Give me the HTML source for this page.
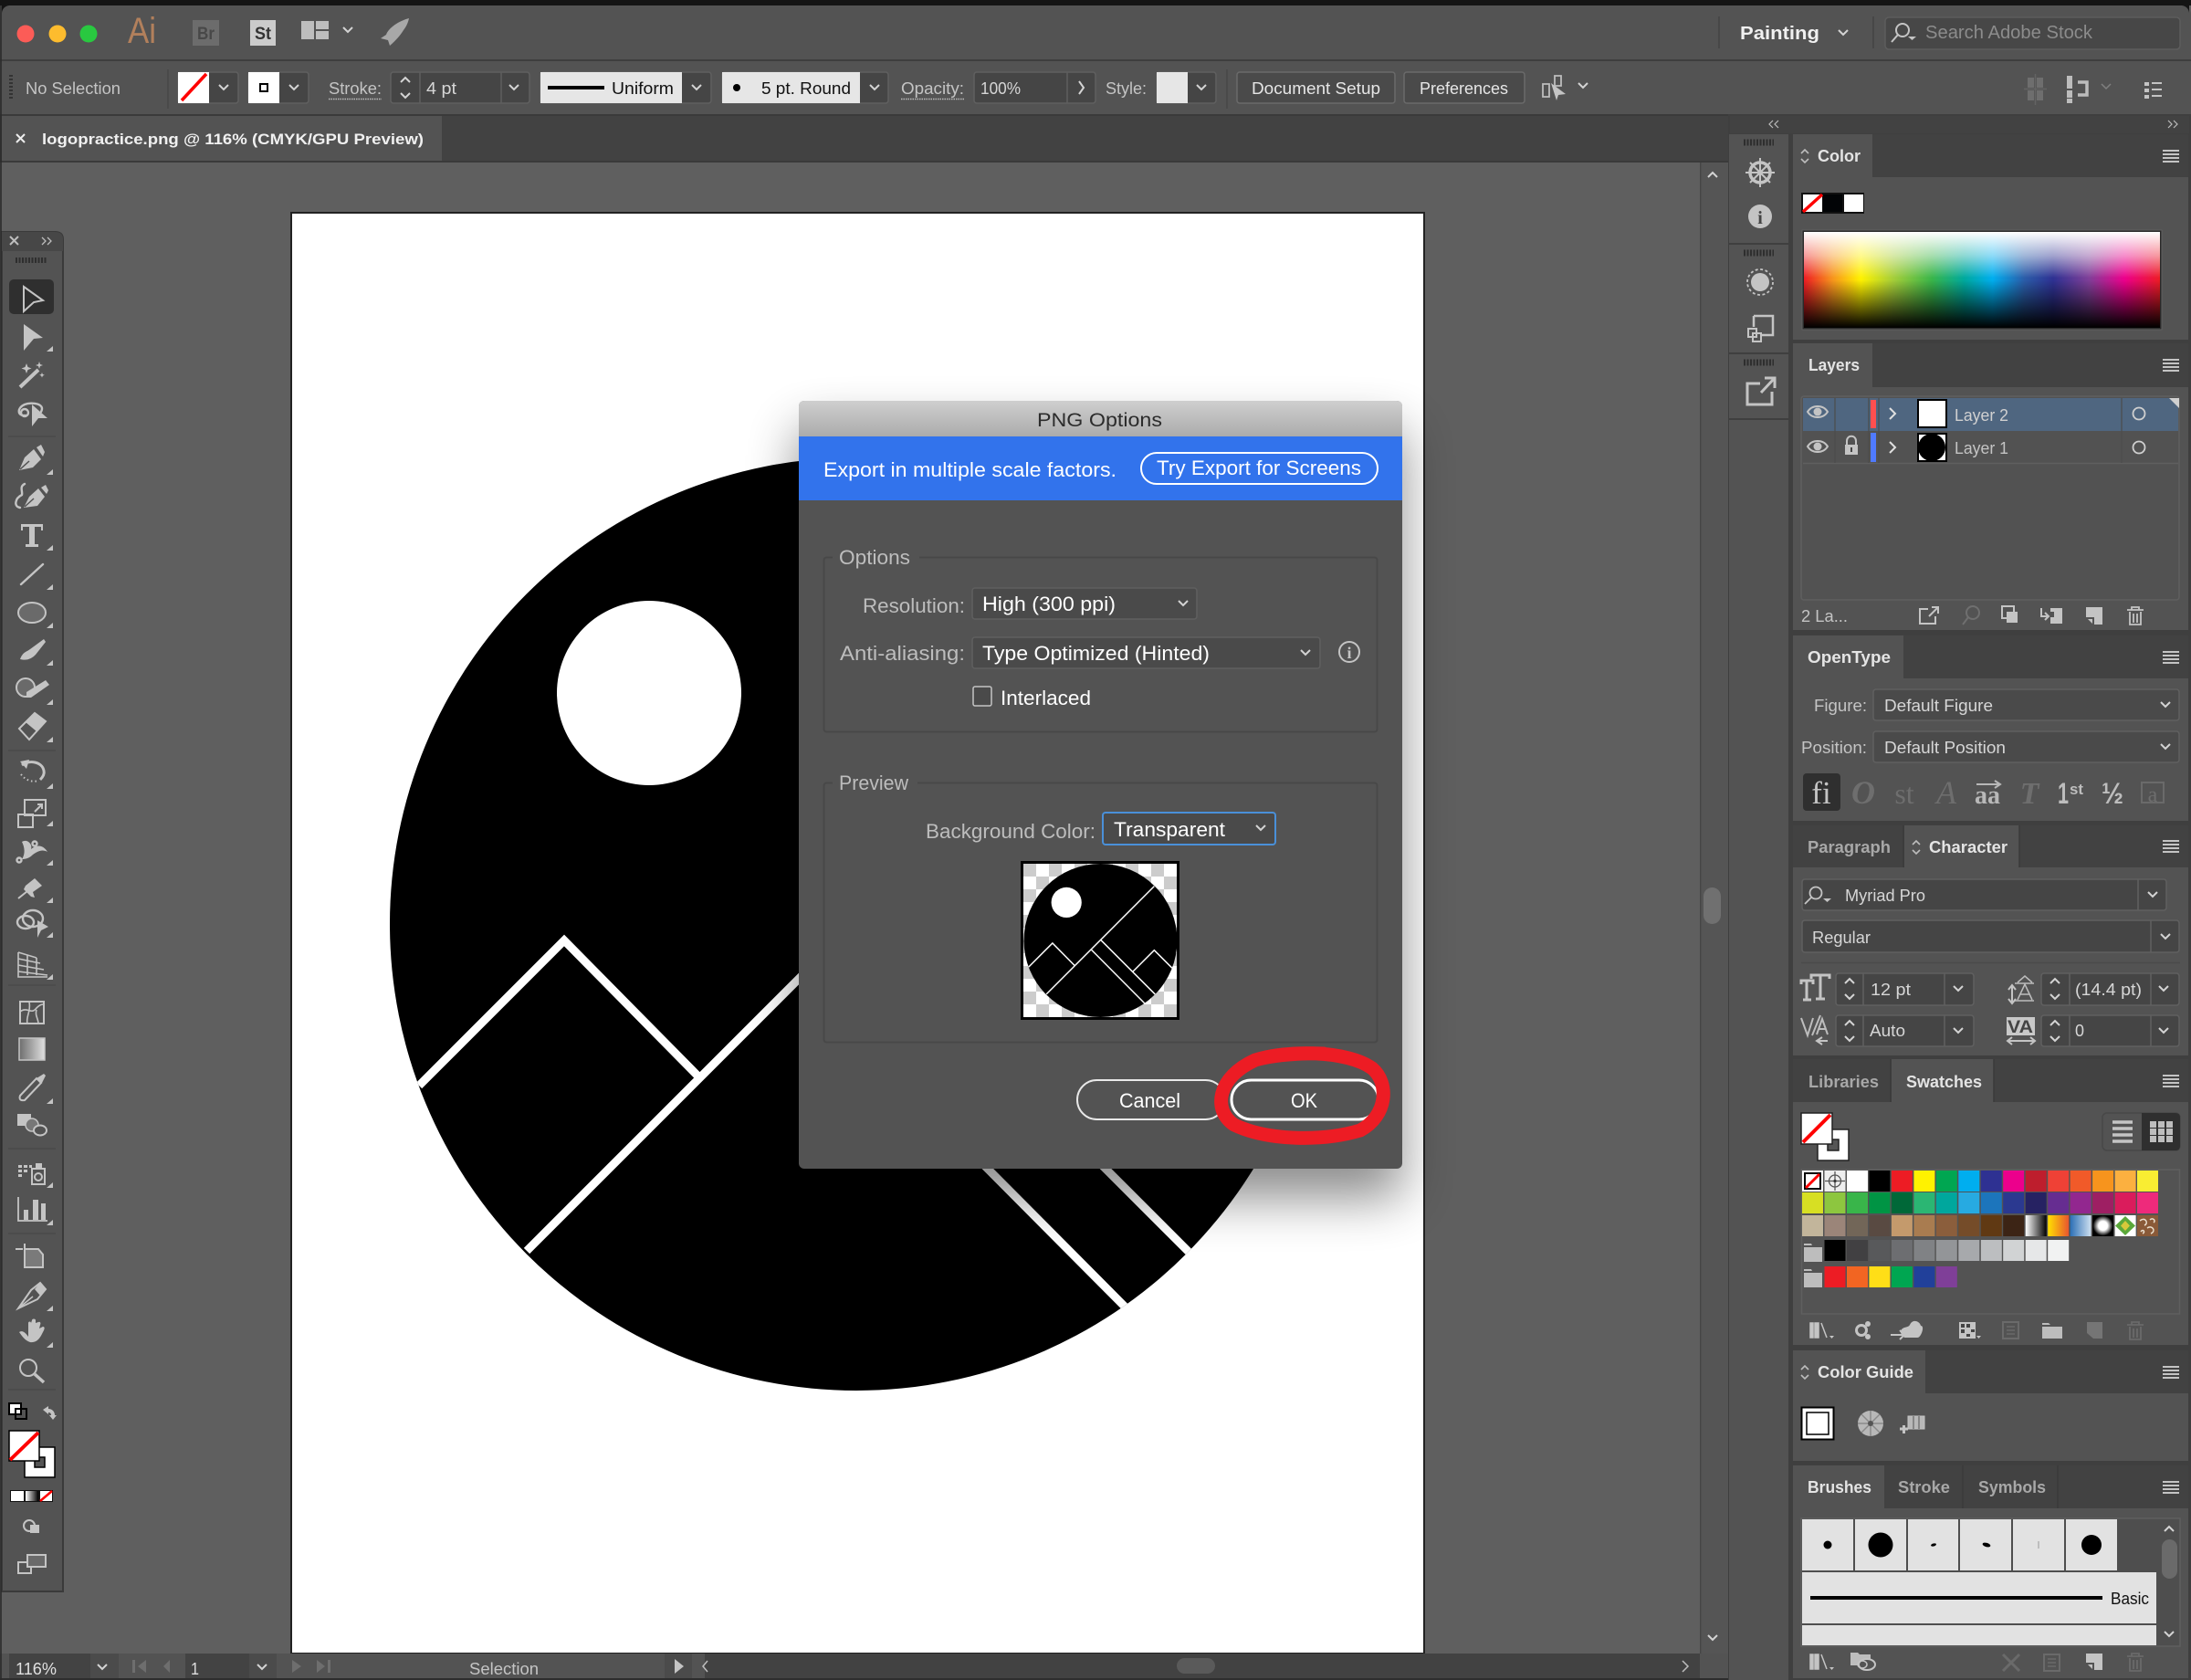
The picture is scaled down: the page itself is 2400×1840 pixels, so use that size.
<!DOCTYPE html>
<html><head><meta charset="utf-8"><title>PNG Options</title>
<style>
html,body{margin:0;padding:0;background:#535353;width:2400px;height:1840px;overflow:hidden}
svg{display:block;position:absolute;left:0;top:0}
text{font-family:"Liberation Sans",sans-serif;font-size:18px;fill:#d6d6d6}
.b{font-weight:700;fill:#e4e4e4}
.g{font-weight:700;fill:#a8a8a8}
.d{fill:#c4c4c4}
.w{fill:#fff;font-size:22px}
.l{fill:#bdbdbd;font-size:22px}
.ic{fill:#c4c4c4;stroke:none}
.st{fill:none;stroke:#c4c4c4;stroke-width:2.4;stroke-linecap:round;stroke-linejoin:round}
.f{fill:#454545;stroke:#606060;stroke-width:1.5}
</style></head><body>
<svg width="2400" height="1840" viewBox="0 0 2400 1840" xmlns="http://www.w3.org/2000/svg">
<defs>
<path id="c" d="M-5-3L0 2L5-3" fill="none" stroke="#d4d4d4" stroke-width="2"/>
<path id="cu" d="M-5 2L0-3L5 2" fill="none" stroke="#d4d4d4" stroke-width="2"/>
<rect id="s" width="23" height="23"/>
<path id="fly" d="M0 0h-7l7-6z" fill="#c4c4c4"/>
<g id="burger"><path d="M0 0h18M0 4h18M0 8h18M0 12h18" stroke="#c4c4c4" stroke-width="2"/></g>
<g id="sp"><use href="#cu" x="0" y="-8"/><use href="#c" x="0" y="9"/></g>
<g id="updn"><path d="M-4-3L0-7L4-3M-4 3L0 7L4 3" fill="none" stroke="#bdbdbd" stroke-width="1.600"/></g>
<g id="eye"><path d="M-11 0C-6-8 6-8 11 0C6 8-6 8-11 0Z" fill="none" stroke="#c4c4c4" stroke-width="2"/><circle r="4.500" fill="#c4c4c4"/></g>
<linearGradient id="tb" x1="0" y1="0" x2="0" y2="1"><stop offset="0" stop-color="#cfcfcf"/><stop offset="1" stop-color="#ababab"/></linearGradient>
<linearGradient id="hue" x1="0" y1="0" x2="1" y2="0">
<stop offset="0" stop-color="#ed1c24"/><stop offset=".08" stop-color="#f7941d"/><stop offset=".16" stop-color="#fff200"/><stop offset=".25" stop-color="#a6ce39"/><stop offset=".36" stop-color="#39b54a"/><stop offset=".45" stop-color="#00a99d"/><stop offset=".53" stop-color="#00aeef"/><stop offset=".62" stop-color="#2b5ca8"/><stop offset=".70" stop-color="#2e3192"/><stop offset=".8" stop-color="#7f3f98"/><stop offset=".9" stop-color="#ec008c"/><stop offset="1" stop-color="#ed1c24"/></linearGradient>
<linearGradient id="wb" x1="0" y1="0" x2="0" y2="1">
<stop offset="0" stop-color="#fff" stop-opacity="1"/><stop offset=".25" stop-color="#fff" stop-opacity=".55"/><stop offset=".48" stop-color="#fff" stop-opacity="0"/><stop offset=".5" stop-color="#000" stop-opacity="0"/><stop offset=".75" stop-color="#000" stop-opacity=".5"/><stop offset="1" stop-color="#000" stop-opacity="1"/></linearGradient>
<linearGradient id="gr1" x1="0" x2="1"><stop offset="0" stop-color="#fff"/><stop offset="1" stop-color="#000"/></linearGradient>
<linearGradient id="gr2" x1="0" x2="1"><stop offset="0" stop-color="#ffe000"/><stop offset="1" stop-color="#e8552f"/></linearGradient>
<linearGradient id="gr3" x1="0" x2="1"><stop offset="0" stop-color="#2b6fb5"/><stop offset="1" stop-color="#cfe0f0"/></linearGradient>
<radialGradient id="gr4"><stop offset=".45" stop-color="#fff"/><stop offset="1" stop-color="#000"/></radialGradient>
<linearGradient id="tg" x1="0" x2="1"><stop offset="0" stop-color="#6d6d6d"/><stop offset="1" stop-color="#e0e0e0"/></linearGradient>
<pattern id="chk" width="28" height="28" patternUnits="userSpaceOnUse" x="1121" y="946"><rect width="28" height="28" fill="#fff"/><rect width="14" height="14" fill="#ccc"/><rect x="14" y="14" width="14" height="14" fill="#ccc"/></pattern>
<clipPath id="cc"><circle cx="938" cy="1012" r="511"/></clipPath>
<g id="art">
<circle cx="938" cy="1012" r="511" fill="#000"/>
<circle cx="711" cy="759" r="101" fill="#fff"/>
<g clip-path="url(#cc)" fill="none" stroke="#fff" stroke-width="9">
<path d="M577 1370L1296 651"/><path d="M459 1189L618 1030L767 1181"/><path d="M875 1072L1232 1431"/><path d="M941 1010L1303 1372"/><path d="M1152 1221L1296 1077L1430 1211"/>
</g></g>
</defs>

<!-- base -->
<rect width="2400" height="1840" fill="#5f5f5f"/>
<rect width="2400" height="6" fill="#141414"/>
<rect x="0" y="6" width="2400" height="60" rx="10" fill="#535353"/>
<rect x="0" y="16" width="2400" height="50" fill="#535353"/>
<rect y="65" width="2400" height="2" fill="#3e3e3e"/>
<rect y="67" width="2400" height="58" fill="#535353"/>
<rect y="125" width="2400" height="52" fill="#424242"/>
<rect y="125" width="2400" height="2" fill="#3a3a3a"/>
<rect x="2" y="127" width="482" height="49" fill="#535353"/>
<rect y="176" width="1893" height="2" fill="#3a3a3a"/>
<rect x="0" y="178" width="1893" height="1640" fill="#5f5f5f"/>

<!-- artboard -->
<rect x="319" y="233" width="1241" height="1578" fill="#fff" stroke="#222" stroke-width="2"/>
<use href="#art"/>

<!-- title bar -->
<circle cx="28" cy="37" r="9.500" fill="#fc5c57"/><circle cx="63" cy="37" r="9.500" fill="#fdbc2e"/><circle cx="97" cy="37" r="9.500" fill="#29c840"/>
<text x="140" y="47" style="font-size:40px;fill:#b2805c" textLength="31" lengthAdjust="spacingAndGlyphs">Ai</text>
<rect x="211" y="22" width="29" height="28" fill="#6c6c6c"/><text x="216" y="43" style="font-size:19px;font-weight:700;fill:#484848" textLength="19" lengthAdjust="spacingAndGlyphs">Br</text>
<rect x="274" y="22" width="28" height="28" fill="#cbcbcb"/><text x="279" y="43" style="font-size:19px;font-weight:700;fill:#333" textLength="18" lengthAdjust="spacingAndGlyphs">St</text>
<path d="M330 23h14v20h-14zM346 23h14v9h-14zM346 34h14v9h-14z" fill="#bdbdbd"/><use href="#c" x="381" y="33"/>
<path d="M448 20C437 23 426 30 423 38L417 42L425 44L427 50C434 44 439 38 442 33C445 29 447 25 448 20Z" fill="#a8a8a8"/>
<path d="M1883 18V53M2052 18V53" stroke="#474747" stroke-width="2"/>
<text x="1906" y="43" class="b" style="font-size:20px;fill:#f0f0f0" textLength="87" lengthAdjust="spacingAndGlyphs">Painting</text><use href="#c" x="2019" y="36"/>
<rect x="2065" y="19" width="323" height="35" rx="4" fill="#474747" stroke="#5d5d5d" stroke-width="1.500"/>
<circle cx="2084" cy="33" r="7" fill="none" stroke="#c4c4c4" stroke-width="2"/><path d="M2079 38L2072 46" stroke="#c4c4c4" stroke-width="2"/><path d="M2090 40h9l-4.500 4z" fill="#c4c4c4"/>
<text x="2109" y="42" style="font-size:20px;fill:#8c8c8c" textLength="183" lengthAdjust="spacingAndGlyphs">Search Adobe Stock</text>

<!-- control bar -->
<path d="M12 82V110" stroke="#333" stroke-width="4" stroke-dasharray="2 2"/>
<text x="28" y="103" class="d" textLength="104" lengthAdjust="spacingAndGlyphs">No Selection</text>
<path d="M184 76V119" stroke="#484848" stroke-width="1.500"/>
<rect x="195" y="79" width="66" height="34" rx="3" class="f"/><rect x="195" y="79" width="34" height="34" fill="#fff"/><path d="M199 110L226 81" stroke="#f00" stroke-width="3.500"/><use href="#c" x="245" y="96"/>
<rect x="272" y="79" width="66" height="34" rx="3" class="f"/><rect x="272" y="79" width="34" height="34" fill="#fff"/><rect x="285" y="92" width="8" height="8" fill="none" stroke="#000" stroke-width="2"/><use href="#c" x="322" y="96"/>
<text x="360" y="103" class="d" textLength="58" lengthAdjust="spacingAndGlyphs">Stroke:</text><path d="M360 108.500H418" stroke="#bbb" stroke-width="1.500" stroke-dasharray="1.500 1"/>
<rect x="428" y="79" width="152" height="34" rx="3" class="f"/><path d="M460 79V113M549 79V113" stroke="#5e5e5e" stroke-width="1.500"/>
<use href="#sp" x="444" y="96"/>
<text x="467" y="103" textLength="33" lengthAdjust="spacingAndGlyphs">4 pt</text><use href="#c" x="563" y="96"/>
<rect x="592" y="79" width="187" height="34" rx="3" class="f"/><rect x="592" y="79" width="155" height="34" fill="#e6e6e6"/><rect x="600" y="94" width="62" height="4" fill="#000"/>
<text x="670" y="103" style="fill:#111" textLength="68" lengthAdjust="spacingAndGlyphs">Uniform</text><use href="#c" x="763" y="96"/>
<rect x="791" y="79" width="182" height="34" rx="3" class="f"/><rect x="791" y="79" width="151" height="34" fill="#e6e6e6"/><circle cx="807" cy="96" r="4" fill="#000"/>
<text x="834" y="103" style="fill:#111" textLength="98" lengthAdjust="spacingAndGlyphs">5 pt. Round</text><use href="#c" x="958" y="96"/>
<text x="987" y="103" class="d" textLength="69" lengthAdjust="spacingAndGlyphs">Opacity:</text><path d="M987 108.500H1056" stroke="#bbb" stroke-width="1.500" stroke-dasharray="1.500 1"/>
<rect x="1067" y="79" width="133" height="34" rx="3" class="f"/><path d="M1169 79V113" stroke="#5e5e5e" stroke-width="1.500"/>
<text x="1074" y="103" textLength="44" lengthAdjust="spacingAndGlyphs">100%</text><path d="M1182 89L1187 96L1182 103" fill="none" stroke="#d4d4d4" stroke-width="2"/>
<text x="1211" y="103" class="d" textLength="45" lengthAdjust="spacingAndGlyphs">Style:</text>
<rect x="1267" y="79" width="65" height="34" rx="3" class="f"/><rect x="1267" y="79" width="34" height="34" fill="#e6e6e6"/><use href="#c" x="1316" y="96"/>
<path d="M1344 76V119" stroke="#484848" stroke-width="1.500"/>
<rect x="1355" y="79" width="173" height="34" rx="3" fill="#4a4a4a" stroke="#6a6a6a" stroke-width="1.500"/><text x="1371" y="103" style="fill:#e6e6e6" textLength="141" lengthAdjust="spacingAndGlyphs">Document Setup</text>
<rect x="1538" y="79" width="132" height="34" rx="3" fill="#4a4a4a" stroke="#6a6a6a" stroke-width="1.500"/><text x="1555" y="103" style="fill:#e6e6e6" textLength="97" lengthAdjust="spacingAndGlyphs">Preferences</text>
<path d="M1690 92h7v14h-7zM1703 83h7v11h-7z" fill="none" stroke="#bdbdbd" stroke-width="1.800"/><path d="M1699 91L1715 103L1707 104L1705 110Z" fill="#c4c4c4"/><use href="#c" x="1734" y="94"/>
<path d="M2221 85h7v11h-7zM2231 85h7v11h-7zM2221 99h7v11h-7zM2231 99h7v11h-7z" fill="#6e6e6e"/><path d="M2229.500 81V115M2217 97.500H2242" stroke="#646464" stroke-width="1.500"/>
<path d="M2264 83h6v14h-6zM2264 99h6v8h-6z" fill="#bdbdbd"/><path d="M2276 90H2286V104H2276" fill="none" stroke="#bdbdbd" stroke-width="3.500"/><rect x="2264" y="108" width="6" height="5" fill="#bdbdbd"/>
<path d="M2302 92L2307 97L2312 92" fill="none" stroke="#808080" stroke-width="1.500"/>
<path d="M2349 90h5v4h-5zM2349 97h5v4h-5zM2349 104h5v4h-5zM2357 90h11v2h-11zM2357 97h11v2h-11zM2357 104h11v2h-11z" fill="#c4c4c4"/>

<!-- doc tab -->
<path d="M18 147L27 156M27 147L18 156" stroke="#eee" stroke-width="2"/>
<text x="46" y="158" class="b" style="font-size:17px;fill:#f0f0f0" textLength="418" lengthAdjust="spacingAndGlyphs">logopractice.png @ 116% (CMYK/GPU Preview)</text>

<!-- v scrollbar -->
<rect x="1862" y="178" width="31" height="1633" fill="#555"/>
<rect x="1862" y="178" width="1.500" height="1633" fill="#464646"/>
<use href="#cu" x="1876" y="192"/><use href="#c" x="1876" y="1794"/>
<rect x="1866" y="972" width="19" height="40" rx="9.500" fill="#707070"/>

<!-- toolbar -->
<path d="M2 254H60Q69 254 69 262V1743H2Z" fill="#535353" stroke="#3a3a3a" stroke-width="2"/>
<path d="M2 254H60Q69 254 69 262V275H2Z" fill="#474747"/>
<path d="M11 259L20 268M20 259L11 268" stroke="#bdbdbd" stroke-width="2"/>
<path d="M46 260L50 264L46 268M52 260L56 264L52 268" fill="none" stroke="#bdbdbd" stroke-width="1.300"/>
<path d="M17 285H51" stroke="#2e2e2e" stroke-width="6" stroke-dasharray="2 1.500"/>
<rect x="10" y="306" width="49" height="38" rx="5" fill="#2f2f2f"/>
<path d="M26 314L47 329L37 331L26 341Z" fill="none" stroke="#c4c4c4" stroke-width="2"/>
<path d="M26 355L47 370L37 371L26 384Z" class="ic"/><use href="#fly" x="58" y="385"/>
<path d="M22 424L42 405" stroke="#c4c4c4" stroke-width="4"/><path d="M29 398l1.500 4 4 1.500-4 1.500-1.500 4-1.500-4-4-1.500 4-1.500zM43 396l1 3 3 1-3 1-1 3-1-3-3-1 3-1zM46 408l.8 2 2 .8-2 .8-.8 2-.8-2-2-.8 2-.8z" class="ic"/>
<path d="M45 451C50 442 35 440 27 443C18 447 19 456 28 455" class="st"/><circle cx="27" cy="452" r="4" class="st"/><path d="M35 443L52 458L42 458L35 467Z" class="ic"/>
<path d="M21 515L27 501L37 492L45 503L36 512Z" class="ic"/><path d="M22 514L32 505" stroke="#535353" stroke-width="1.500"/><path d="M40 490L45 487L49 495L47 500Z" class="ic"/><use href="#fly" x="58" y="520"/>
<path d="M26 556L32 544L42 535L49 544L41 554Z" class="ic"/><path d="M27 555L37 546" stroke="#535353" stroke-width="1.500"/><path d="M45 534L50 531L53 537L51 541Z" class="ic"/><path d="M27 530C21 533 25 538 24 542C16 546 15 555 22 556" class="st"/>
<path d="M23 581V574H47V581H45V577H38V596H42V599H28V596H32V577H25V581Z" class="ic"/><use href="#fly" x="58" y="603"/>
<path d="M23 640L47 618" class="st"/><use href="#fly" x="58" y="646"/>
<ellipse cx="35" cy="671" rx="15" ry="11" fill="#6a6a6a" stroke="#c4c4c4" stroke-width="2"/><use href="#fly" x="58" y="688"/>
<path d="M22 722C25 714 29 714 33 711L48 700L50 703L39 717C35 721 30 724 22 722Z" class="ic"/><use href="#fly" x="58" y="729"/>
<circle cx="28" cy="753" r="10" fill="#6a6a6a" stroke="#c4c4c4" stroke-width="2"/><path d="M29 758L50 745L54 750L34 764L29 764Z" class="ic"/><use href="#fly" x="58" y="772"/>
<path d="M21 798L38 781L50 790L32 810Z" fill="none" stroke="#c4c4c4" stroke-width="2"/><path d="M28 791L38 781L50 790L40 801Z" class="ic"/><use href="#fly" x="58" y="813"/>
<path d="M24 838C32 832 46 834 48 844C49 848 46 852 44 854" fill="none" stroke="#c4c4c4" stroke-width="3"/><path d="M22 834L32 832L29 842Z" class="ic"/><path d="M23 848C28 855 36 857 42 855" fill="none" stroke="#c4c4c4" stroke-width="2" stroke-dasharray="1.500 3"/><use href="#fly" x="58" y="864"/>
<path d="M20 892h16v14h-16zM27 876h23v17h-23z" fill="none" stroke="#c4c4c4" stroke-width="2"/><path d="M38 889L46 881M41 881H46V886" fill="none" stroke="#c4c4c4" stroke-width="2"/><use href="#fly" x="58" y="905"/>
<path d="M24 941C28 935 27 928 24 922C30 918 36 925 34 930C40 925 47 925 52 933C46 930 42 932 36 936C32 940 28 941 24 941Z" class="ic"/><circle cx="21" cy="942" r="2.500" class="st"/><circle cx="38" cy="924" r="2.500" class="st"/><use href="#fly" x="58" y="948"/>
<path d="M20 984L30 976" stroke="#c4c4c4" stroke-width="2"/><path d="M28 970L38 962L46 970L36 977L38 983L34 982L26 974Z" class="ic"/><use href="#fly" x="58" y="989"/>
<ellipse cx="28" cy="1010" rx="9" ry="7" class="st"/><ellipse cx="36" cy="1006" rx="11" ry="9" class="st"/><path d="M41 1008L53 1015L45 1019L41 1027Z" class="ic"/><use href="#fly" x="58" y="1027"/>
<path d="M20 1043V1070H52M20 1043L40 1049M20 1050L44 1055M20 1057L48 1062M20 1064L52 1068M30 1046V1068M40 1049V1068" fill="none" stroke="#c4c4c4" stroke-width="1.600"/><use href="#fly" x="58" y="1073"/>
<path d="M22 1097H48V1121H22Z" fill="none" stroke="#c4c4c4" stroke-width="2"/><path d="M22 1108C30 1102 34 1112 40 1104C44 1100 46 1100 48 1100M32 1097C34 1108 28 1114 30 1121M40 1106C38 1112 42 1116 42 1121" fill="none" stroke="#c4c4c4" stroke-width="1.600"/>
<rect x="21" y="1137" width="28" height="24" fill="url(#tg)" stroke="#c4c4c4" stroke-width="1.500"/>
<path d="M22 1200L40 1181L45 1186L27 1205Q20 1206 22 1200Z" fill="none" stroke="#c4c4c4" stroke-width="2"/><path d="M40 1181L48 1176L50 1178L46 1186Z" class="ic"/><use href="#fly" x="58" y="1209"/>
<rect x="19" y="1220" width="15" height="13" fill="#c4c4c4"/><circle cx="35" cy="1232" r="7" fill="#777" stroke="#c4c4c4" stroke-width="1.500"/><ellipse cx="44" cy="1238" rx="7" ry="5.500" fill="#535353" stroke="#c4c4c4" stroke-width="2"/>
<path d="M20 1276h4v3h-4zM26 1276h4v3h-4zM32 1276h3v3h-3zM20 1281h4v3h-4zM26 1281h4v3h-4zM20 1286h4v3h-4z" class="ic"/><path d="M35 1280H49V1297H35Z" fill="none" stroke="#c4c4c4" stroke-width="2"/><rect x="39" y="1274" width="7" height="6" fill="#c4c4c4"/><circle cx="42" cy="1289" r="4" fill="none" stroke="#c4c4c4" stroke-width="2"/><use href="#fly" x="58" y="1301"/>
<path d="M20 1311V1337H52" fill="none" stroke="#c4c4c4" stroke-width="1.800"/><path d="M26 1325h5v11h-5zM36 1314h6v22h-6zM45 1318h5v18h-5z" class="ic"/><use href="#fly" x="58" y="1342"/>
<path d="M27 1362V1372M17 1368H25" stroke="#c4c4c4" stroke-width="2"/><path d="M27 1368H42L47 1374V1388H27Z" fill="#7a7a7a" stroke="#c4c4c4" stroke-width="2"/>
<path d="M20 1433L34 1413L44 1405L50 1412L41 1423Z" fill="none" stroke="#c4c4c4" stroke-width="2"/><path d="M20 1433L36 1420" stroke="#c4c4c4" stroke-width="1.500"/><path d="M38 1412L44 1405L50 1412L44 1419Z" class="ic"/><use href="#fly" x="58" y="1436"/>
<path d="M21 1459C25 1456 29 1461 31 1464V1449C31 1447 34 1447 34 1449L35 1446C35 1444 39 1444 39 1446V1449L42 1448C44 1447 45 1449 44 1451L43 1455L47 1453C49 1453 49 1455 48 1457C45 1463 42 1471 33 1470C27 1468 24 1463 21 1459Z" class="ic"/><use href="#fly" x="58" y="1476"/>
<circle cx="31" cy="1498" r="9" fill="none" stroke="#c4c4c4" stroke-width="2"/><path d="M38 1505L48 1514" stroke="#c4c4c4" stroke-width="3.500"/>
<rect x="10" y="1537" width="13" height="12" fill="#fff" stroke="#000" stroke-width="2"/><rect x="17" y="1543" width="12" height="11" fill="none" stroke="#000" stroke-width="2"/>
<path d="M47 1544L53 1540V1543C57 1543 60 1546 60 1550H62L58 1555L54 1550H56C56 1548 55 1547 53 1547V1549Z" class="ic"/>
<rect x="27" y="1585" width="33" height="33" fill="#fff" stroke="#000" stroke-width="1.500"/><rect x="38" y="1596" width="11" height="11" fill="#555" stroke="#000" stroke-width="1.500"/>
<rect x="10" y="1567" width="33" height="33" fill="#fff" stroke="#000" stroke-width="1.500"/><path d="M11 1599L42 1569" stroke="#f00" stroke-width="4"/>
<rect x="11" y="1632" width="47" height="13" fill="#111"/><rect x="12" y="1633" width="14" height="11" fill="#fff"/><rect x="28" y="1633" width="14" height="11" fill="url(#gr1)"/><rect x="44" y="1633" width="13" height="11" fill="#fff"/><path d="M44 1644L57 1633" stroke="#f00" stroke-width="2.500"/>
<circle cx="32" cy="1671" r="6" fill="none" stroke="#c4c4c4" stroke-width="2"/><rect x="33" y="1670" width="10" height="9" fill="#c4c4c4"/>
<path d="M20 1711h14v12h-14z" fill="none" stroke="#c4c4c4" stroke-width="2"/><rect x="30" y="1703" width="20" height="13" fill="#6a6a6a" stroke="#c4c4c4" stroke-width="2"/>
<path d="M9 478H61M9 822H61M9 1079H61M9 1258H61M9 1351H61M9 1522H61" stroke="#4a4a4a" stroke-width="1.500"/>

<!-- status bar -->
<rect x="0" y="1811" width="1893" height="27" fill="#535353"/>
<rect x="772" y="1811" width="1090" height="27" fill="#424242"/>
<rect x="10" y="1811" width="89" height="27" fill="#434343"/><rect x="99" y="1811" width="31" height="27" fill="#4b4b4b"/>
<rect x="203" y="1811" width="70" height="27" fill="#434343"/><rect x="273" y="1811" width="30" height="27" fill="#4b4b4b"/>
<text x="17" y="1834" style="fill:#e0e0e0" textLength="45" lengthAdjust="spacingAndGlyphs">116%</text><use href="#c" x="112" y="1826"/>
<path d="M145 1818h3v14h-3zM160 1818L151 1825L160 1832ZM186 1818L179 1825L186 1832Z" fill="#6e6e6e"/>
<text x="209" y="1834" style="fill:#e0e0e0" textLength="9" lengthAdjust="spacingAndGlyphs">1</text><use href="#c" x="287" y="1826"/>
<path d="M320 1818L330 1825L320 1832ZM347 1818L356 1825L347 1832ZM359 1818h3v14h-3z" fill="#6e6e6e"/>
<text x="514" y="1834" class="d" textLength="76" lengthAdjust="spacingAndGlyphs">Selection</text>
<rect x="728" y="1811" width="30" height="27" fill="#4b4b4b"/><path d="M739 1817L749 1825L739 1833Z" fill="#c4c4c4"/>
<path d="M775 1819L770 1825L775 1831" fill="none" stroke="#bdbdbd" stroke-width="1.500"/>
<rect x="1289" y="1816" width="42" height="17" rx="8.500" fill="#5a5a5a"/>
<path d="M1843 1819L1849 1825L1843 1831" fill="none" stroke="#bdbdbd" stroke-width="1.500"/>
<rect y="1838" width="2400" height="2" fill="#2e2e2e"/>

<!-- panels background -->
<rect x="1893" y="125" width="507" height="1715" fill="#3f3f3f"/>
<rect x="1895" y="127" width="503" height="19" fill="#424242"/>
<path d="M1942 132L1938 136L1942 140M1948 132L1944 136L1948 140" fill="none" stroke="#bdbdbd" stroke-width="1.200"/>
<path d="M2375 132L2379 136L2375 140M2381 132L2385 136L2381 140" fill="none" stroke="#bdbdbd" stroke-width="1.200"/>

<!-- icon dock -->
<rect x="1894" y="147" width="65" height="119" fill="#535353"/><rect x="1894" y="268" width="65" height="118" fill="#535353"/><rect x="1894" y="388" width="65" height="70" fill="#535353"/><rect x="1894" y="460" width="65" height="1380" fill="#535353"/>
<path d="M1910 156H1943M1910 277H1943M1910 397H1943" stroke="#2e2e2e" stroke-width="7" stroke-dasharray="2 1.500"/>
<circle cx="1928" cy="189" r="11" fill="none" stroke="#c4c4c4" stroke-width="3.500"/><circle cx="1928" cy="189" r="3" fill="#c4c4c4"/><path d="M1928 173V205M1912 189H1944M1917 178L1939 200M1939 178L1917 200" stroke="#c4c4c4" stroke-width="2"/>
<circle cx="1928" cy="237" r="13" fill="#c4c4c4"/><text x="1928" y="245" text-anchor="middle" style="font-size:20px;font-weight:700;font-family:'Liberation Serif',serif;fill:#444">i</text>
<circle cx="1928" cy="309" r="10" fill="#c4c4c4"/><circle cx="1928" cy="309" r="14" fill="none" stroke="#c4c4c4" stroke-width="1.800" stroke-dasharray="3 2.500"/>
<path d="M1921 346H1942V367H1928" fill="none" stroke="#c4c4c4" stroke-width="2.500"/><path d="M1915 360h9v9h-9zM1920 365h9v9h-9z" fill="#535353" stroke="#c4c4c4" stroke-width="2"/><path d="M1921 346V358" stroke="#c4c4c4" stroke-width="2.500"/>
<path d="M1928 420H1914V443H1941V429" fill="none" stroke="#c4c4c4" stroke-width="3"/><path d="M1929 430L1943 415M1933 414H1944V425" fill="none" stroke="#c4c4c4" stroke-width="3"/>

<!-- Color panel -->
<rect x="1964" y="147" width="433" height="47" fill="#424242"/><rect x="1964" y="194" width="433" height="178" fill="#535353"/><rect x="1964" y="147" width="87" height="48" fill="#535353"/>
<use href="#updn" x="1977" y="171"/><text x="1991" y="177" class="b" textLength="47" lengthAdjust="spacingAndGlyphs">Color</text><use href="#burger" x="2369" y="165"/>
<rect x="1973" y="211" width="69" height="23" fill="#111"/><rect x="1975" y="213" width="21" height="19" fill="#fff"/><path d="M1975 232L1996 213" stroke="#f00" stroke-width="3.500"/><rect x="1997" y="213" width="21" height="19" fill="#020406"/><rect x="2020" y="213" width="21" height="19" fill="#fff"/>
<rect x="1974" y="252" width="394" height="109" fill="#2a2a2a" stroke="#606060" stroke-width="1"/>
<rect x="1976" y="254" width="390" height="105" fill="url(#hue)"/><rect x="1976" y="254" width="390" height="105" fill="url(#wb)"/>

<!-- Layers -->
<rect x="1964" y="376" width="433" height="48" fill="#424242"/><rect x="1964" y="424" width="433" height="266" fill="#535353"/><rect x="1964" y="376" width="87" height="49" fill="#535353"/>
<text x="1981" y="406" class="b" textLength="56" lengthAdjust="spacingAndGlyphs">Layers</text><use href="#burger" x="2369" y="394"/>
<rect x="1973" y="434" width="414" height="223" rx="3" fill="#525252" stroke="#5f5f5f" stroke-width="1.500"/>
<rect x="1975" y="436" width="411" height="36" fill="#4f6680"/><path d="M1975 507.500H2386" stroke="#5f5f5f" stroke-width="1.500"/>
<path d="M2010 436V507M2047 436V507M2058 436V507M2324 436V507" stroke="#4c4c4c" stroke-width="1.200"/>
<path d="M2376 436H2387V447Z" fill="#d0d0d0"/>
<use href="#eye" x="1991" y="451"/><use href="#eye" x="1991" y="489"/>
<path d="M2023 487V483C2023 476 2033 476 2033 483V487" fill="none" stroke="#c4c4c4" stroke-width="2"/><rect x="2021" y="487" width="14" height="11" fill="#c4c4c4"/><rect x="2027" y="490" width="2" height="5" fill="#444"/>
<rect x="2049" y="438" width="6" height="31" fill="#ff4f4f"/><rect x="2049" y="474" width="6" height="32" fill="#4f7aff"/>
<path d="M2070 447L2076 453L2070 459M2070 484L2076 490L2070 496" fill="none" stroke="#e0e0e0" stroke-width="2"/>
<rect x="2100" y="437" width="33" height="32" fill="#000"/><rect x="2102" y="439" width="29" height="28" fill="#fff"/>
<rect x="2100" y="474" width="33" height="32" fill="#000"/><rect x="2102" y="476" width="29" height="28" fill="#fff"/><circle cx="2116" cy="490" r="15" fill="#000"/>
<text x="2141" y="461" textLength="59" lengthAdjust="spacingAndGlyphs" style="fill:#d0d0d0">Layer 2</text><text x="2141" y="497" textLength="59" lengthAdjust="spacingAndGlyphs" style="fill:#c4c4c4">Layer 1</text>
<circle cx="2343" cy="453" r="6.500" fill="none" stroke="#d0d0d0" stroke-width="1.800"/><circle cx="2343" cy="490" r="6.500" fill="none" stroke="#d0d0d0" stroke-width="1.800"/>
<text x="1973" y="681" class="d" textLength="51" lengthAdjust="spacingAndGlyphs">2 La...</text>
<path d="M2112 667H2103V683H2120V675M2113 675L2122 666M2116 665H2123V672" fill="none" stroke="#c4c4c4" stroke-width="2"/>
<circle cx="2161" cy="671" r="7" fill="none" stroke="#6f6f6f" stroke-width="2"/><path d="M2156 676L2150 684" stroke="#6f6f6f" stroke-width="2"/>
<path d="M2193 664h13v13h-13z" fill="none" stroke="#c4c4c4" stroke-width="2"/><rect x="2198" y="670" width="12" height="12" fill="#c4c4c4"/>
<path d="M2236 666V675H2244M2240 671L2244 675L2240 679" fill="none" stroke="#c4c4c4" stroke-width="2"/><path d="M2246 666H2259V683H2246V676H2250V670H2246Z" fill="#c4c4c4"/>
<path d="M2285 665H2303V684H2293L2285 676Z" fill="#c4c4c4"/><path d="M2285 677H2293V685" fill="none" stroke="#535353" stroke-width="2"/>
<path d="M2330 668H2348M2335 668V665H2343V668M2333 670V684H2345V670M2337 672V682M2341 672V682" fill="none" stroke="#c4c4c4" stroke-width="1.800"/>

<!-- OpenType -->
<rect x="1964" y="696" width="433" height="47" fill="#424242"/><rect x="1964" y="743" width="433" height="156" fill="#535353"/><rect x="1964" y="696" width="121" height="48" fill="#535353"/>
<text x="1980" y="726" class="b" textLength="91" lengthAdjust="spacingAndGlyphs">OpenType</text><use href="#burger" x="2369" y="714"/>
<text x="1987" y="779" class="d" textLength="58" lengthAdjust="spacingAndGlyphs">Figure:</text><text x="1973" y="825" class="d" textLength="72" lengthAdjust="spacingAndGlyphs">Position:</text>
<rect x="2052" y="755" width="335" height="34" rx="3" fill="#4a4a4a" stroke="#606060" stroke-width="1.500"/><rect x="2052" y="801" width="335" height="34" rx="3" fill="#4a4a4a" stroke="#606060" stroke-width="1.500"/>
<text x="2064" y="779" textLength="119" lengthAdjust="spacingAndGlyphs">Default Figure</text><text x="2064" y="825" textLength="133" lengthAdjust="spacingAndGlyphs">Default Position</text>
<use href="#c" x="2372" y="772"/><use href="#c" x="2372" y="818"/>
<rect x="1975" y="847" width="41" height="41" rx="4" fill="#2f2f2f"/>
<text x="1995" y="880" text-anchor="middle" style="font-family:'Liberation Serif',serif;font-size:35px;fill:#c4c4c4">fi</text>
<text x="2041" y="880" text-anchor="middle" style="font-family:'Liberation Serif',serif;font-size:36px;font-style:italic;font-weight:700;fill:#6e6e6e">O</text>
<text x="2086" y="880" text-anchor="middle" style="font-family:'Liberation Serif',serif;font-size:32px;fill:#6e6e6e">st</text>
<text x="2132" y="880" text-anchor="middle" style="font-family:'Liberation Serif',serif;font-size:36px;font-style:italic;fill:#6e6e6e">A</text>
<text x="2177" y="880" text-anchor="middle" style="font-family:'Liberation Serif',serif;font-size:28px;font-weight:700;fill:#b8b8b8">aa</text>
<path d="M2165 859H2190M2185 855L2191 859L2185 863" fill="none" stroke="#b8b8b8" stroke-width="2"/>
<text x="2223" y="880" text-anchor="middle" style="font-family:'Liberation Serif',serif;font-size:34px;font-style:italic;font-weight:700;fill:#6e6e6e">T</text>
<text x="2260" y="880" text-anchor="middle" style="font-size:32px;font-weight:700;fill:#bdbdbd" textLength="12" lengthAdjust="spacingAndGlyphs">1</text>
<text x="2267" y="870" style="font-size:17px;font-weight:700;fill:#bdbdbd" textLength="15" lengthAdjust="spacingAndGlyphs">st</text>
<text x="2314" y="880" text-anchor="middle" style="font-size:32px;font-weight:700;fill:#bdbdbd" textLength="24" lengthAdjust="spacingAndGlyphs">½</text>
<rect x="2346" y="857" width="24" height="22" fill="none" stroke="#6a6a6a" stroke-width="2"/><text x="2358" y="878" text-anchor="middle" style="font-family:'Liberation Serif',serif;font-size:24px;fill:#6e6e6e">a</text>

<!-- Character -->
<rect x="1964" y="904" width="433" height="47" fill="#424242"/><rect x="1964" y="950" width="433" height="206" fill="#535353"/>
<rect x="2086" y="904" width="126" height="47" fill="#535353"/>
<path d="M2085 904V950M2212 904V950" stroke="#3a3a3a" stroke-width="1.500"/>
<text x="1980" y="934" class="g" textLength="91" lengthAdjust="spacingAndGlyphs">Paragraph</text><use href="#updn" x="2099" y="928"/><text x="2113" y="934" class="b" textLength="86" lengthAdjust="spacingAndGlyphs">Character</text><use href="#burger" x="2369" y="921"/>
<rect x="1974" y="963" width="399" height="34" rx="3" class="f"/><path d="M2342 963V997" stroke="#606060" stroke-width="1.500"/>
<circle cx="1989" cy="978" r="6.500" fill="none" stroke="#c4c4c4" stroke-width="1.800"/><path d="M1984 983L1977 990" stroke="#c4c4c4" stroke-width="1.800"/><path d="M1997 984h9l-4.500 4z" fill="#c4c4c4"/>
<text x="2021" y="987" textLength="88" lengthAdjust="spacingAndGlyphs">Myriad Pro</text><use href="#c" x="2358" y="980"/>
<rect x="1974" y="1008" width="413" height="35" rx="3" class="f"/><path d="M2356 1008V1043" stroke="#606060" stroke-width="1.500"/>
<text x="1985" y="1033" textLength="64" lengthAdjust="spacingAndGlyphs">Regular</text><use href="#c" x="2372" y="1026"/>
<path d="M1973 1054.500H2388" stroke="#4b4b4b" stroke-width="1.500"/>
<rect x="2011" y="1066" width="151" height="35" rx="3" class="f"/><path d="M2041 1066V1101M2130 1066V1101" stroke="#606060" stroke-width="1.500"/><use href="#sp" x="2026" y="1083"/><text x="2049" y="1090" textLength="44" lengthAdjust="spacingAndGlyphs">12 pt</text><use href="#c" x="2145" y="1083"/>
<rect x="2236" y="1066" width="151" height="35" rx="3" class="f"/><path d="M2267 1066V1101M2356 1066V1101" stroke="#606060" stroke-width="1.500"/><use href="#sp" x="2251" y="1083"/><text x="2273" y="1090" textLength="73" lengthAdjust="spacingAndGlyphs">(14.4 pt)</text><use href="#c" x="2370" y="1083"/>
<rect x="2011" y="1112" width="151" height="34" rx="3" class="f"/><path d="M2041 1112V1146M2130 1112V1146" stroke="#606060" stroke-width="1.500"/><use href="#sp" x="2026" y="1129"/><text x="2048" y="1135" textLength="39" lengthAdjust="spacingAndGlyphs">Auto</text><use href="#c" x="2145" y="1129"/>
<rect x="2236" y="1112" width="151" height="34" rx="3" class="f"/><path d="M2267 1112V1146M2356 1112V1146" stroke="#606060" stroke-width="1.500"/><use href="#sp" x="2251" y="1129"/><text x="2273" y="1135" textLength="10" lengthAdjust="spacingAndGlyphs">0</text><use href="#c" x="2370" y="1129"/>
<path d="M1973 1078V1074H1986V1078M1979 1074V1095M1975 1095H1984M1984 1072V1068H2004V1072M1994 1068V1094M1989 1094H1999" fill="none" stroke="#c4c4c4" stroke-width="3"/>
<path d="M2207 1096H2228M2210 1095L2218 1078L2226 1095M2213 1089H2223" fill="none" stroke="#bdbdbd" stroke-width="1.500"/><path d="M2207 1077H2228M2210 1076L2218 1069L2226 1076" fill="none" stroke="#bdbdbd" stroke-width="1.500"/><path d="M2204 1080V1098M2200 1084L2204 1079L2208 1084M2200 1094L2204 1099L2208 1094" fill="none" stroke="#c4c4c4" stroke-width="2"/>
<path d="M1973 1115L1980 1134L1986 1115M1994 1112L1985 1134M1990 1133L1996 1116L2002 1133M1992 1127H2000" fill="none" stroke="#bdbdbd" stroke-width="2"/><path d="M2002 1140H1990M1996 1136L1990 1140L1996 1144" fill="none" stroke="#c4c4c4" stroke-width="2"/>
<rect x="2198" y="1114" width="31" height="20" fill="#c8c8c8"/><text x="2199" y="1131" style="font-size:19px;font-weight:700;fill:#444" textLength="28" lengthAdjust="spacingAndGlyphs">VA</text><path d="M2200 1140H2228M2204 1136L2199 1140L2204 1144M2224 1136L2229 1140L2224 1144" fill="none" stroke="#c4c4c4" stroke-width="2"/>

<!-- Swatches -->
<rect x="1964" y="1160" width="433" height="47" fill="#424242"/><rect x="1964" y="1207" width="433" height="266" fill="#535353"/><rect x="2072" y="1160" width="112" height="48" fill="#535353"/>
<path d="M2071 1160V1207M2184 1160V1207" stroke="#3a3a3a" stroke-width="1.500"/>
<text x="1981" y="1191" class="g" textLength="77" lengthAdjust="spacingAndGlyphs">Libraries</text><text x="2088" y="1191" class="b" textLength="83" lengthAdjust="spacingAndGlyphs">Swatches</text><use href="#burger" x="2369" y="1178"/>
<rect x="1991" y="1237" width="34" height="34" fill="#fff" stroke="#222" stroke-width="1.500"/><rect x="2002" y="1248" width="12" height="12" fill="#555" stroke="#222" stroke-width="1.500"/>
<rect x="1973" y="1219" width="34" height="34" fill="#fff" stroke="#222" stroke-width="1.500"/><path d="M1975 1251L2005 1221" stroke="#f00" stroke-width="4"/>
<rect x="2303" y="1219" width="85" height="41" rx="5" fill="#535353" stroke="#484848" stroke-width="1.500"/><path d="M2346 1219H2383Q2388 1219 2388 1224V1255Q2388 1260 2383 1260H2346Z" fill="#2f2f2f"/>
<path d="M2314 1229H2336M2314 1236H2336M2314 1243H2336M2314 1250H2336" stroke="#c4c4c4" stroke-width="3.500"/>
<path d="M2355 1228h7v7h-7zM2364 1228h7v7h-7zM2373 1228h7v7h-7zM2355 1236h7v7h-7zM2364 1236h7v7h-7zM2373 1236h7v7h-7zM2355 1244h7v7h-7zM2364 1244h7v7h-7zM2373 1244h7v7h-7z" fill="#bdbdbd"/>
<rect x="1973.500" y="1281" width="414" height="158" fill="none" stroke="#5f5f5f" stroke-width="1.500"/>
<g transform="translate(0,1282)">
<rect x="1974" width="23" height="23" fill="#fff"/><rect x="1977" y="3" width="17" height="17" fill="#fff" stroke="#000" stroke-width="2"/><path d="M1978 19L1993 4" stroke="#f00" stroke-width="3"/>
<rect x="1998.500" width="23" height="23" fill="#eee"/><circle cx="2010" cy="11.500" r="6.500" fill="none" stroke="#555" stroke-width="1.300"/><path d="M2010 1V22M1999 11.500H2021" stroke="#555" stroke-width="1.300"/><circle cx="2010" cy="11.500" r="1.600" fill="#333"/>
<use href="#s" x="2023" fill="#fff"/><use href="#s" x="2047.400" fill="#000"/><use href="#s" x="2071.900" fill="#ed1c24"/><use href="#s" x="2096.400" fill="#fff200"/><use href="#s" x="2120.800" fill="#00a651"/><use href="#s" x="2145.300" fill="#00aeef"/><use href="#s" x="2169.800" fill="#2e3192"/><use href="#s" x="2194.200" fill="#ec008c"/><use href="#s" x="2218.700" fill="#be1e2d"/><use href="#s" x="2243.200" fill="#ef4136"/><use href="#s" x="2267.600" fill="#f15a29"/><use href="#s" x="2292.100" fill="#f7941d"/><use href="#s" x="2316.600" fill="#fbb040"/><use href="#s" x="2341" fill="#f9ed32"/>
</g>
<g transform="translate(0,1306)">
<use href="#s" x="1974" fill="#d7df23"/><use href="#s" x="1998.500" fill="#8dc63f"/><use href="#s" x="2023" fill="#39b54a"/><use href="#s" x="2047.400" fill="#009444"/><use href="#s" x="2071.900" fill="#006838"/><use href="#s" x="2096.400" fill="#2bb673"/><use href="#s" x="2120.800" fill="#00a79d"/><use href="#s" x="2145.300" fill="#27aae1"/><use href="#s" x="2169.800" fill="#1c75bc"/><use href="#s" x="2194.200" fill="#2b3990"/><use href="#s" x="2218.700" fill="#262262"/><use href="#s" x="2243.200" fill="#662d91"/><use href="#s" x="2267.600" fill="#92278f"/><use href="#s" x="2292.100" fill="#9e1f63"/><use href="#s" x="2316.600" fill="#da1c5c"/><use href="#s" x="2341" fill="#ee2a7b"/>
</g>
<g transform="translate(0,1331)">
<use href="#s" x="1974" fill="#c2b59b"/><use href="#s" x="1998.500" fill="#9b8579"/><use href="#s" x="2023" fill="#726658"/><use href="#s" x="2047.400" fill="#594a42"/><use href="#s" x="2071.900" fill="#c49a6c"/><use href="#s" x="2096.400" fill="#a97c50"/><use href="#s" x="2120.800" fill="#8b5e3c"/><use href="#s" x="2145.300" fill="#754c29"/><use href="#s" x="2169.800" fill="#603913"/><use href="#s" x="2194.200" fill="#3c2415"/>
<use href="#s" x="2218.700" fill="url(#gr1)"/><use href="#s" x="2243.200" fill="url(#gr2)"/><use href="#s" x="2267.600" fill="url(#gr3)"/><rect x="2292.100" width="23" height="23" fill="#000"/><circle cx="2303.600" cy="11.500" r="11" fill="url(#gr4)"/>
<use href="#s" x="2316.600" fill="#fff"/><path d="M2328 1L2339 11.500L2328 22L2317 11.500Z" fill="#5aa83a"/><path d="M2328 6L2333 11.500L2328 17L2323 11.500Z" fill="#d6c83a"/>
<use href="#s" x="2341" fill="#8a5a38"/><path d="M2344 6C2350 1 2354 9 2349 11M2352 14C2358 10 2362 18 2356 20M2345 18C2348 14 2350 19 2347 20M2355 5C2358 2 2362 6 2359 8" fill="none" stroke="#eadfce" stroke-width="1.500"/>
</g>
<g transform="translate(0,1358)">
<path d="M1976 4h8l1 2h-9zM1976 8h20v16h-20z" fill="#bdbdbd"/>
<use href="#s" x="1998.500" fill="#000"/><use href="#s" x="2023" fill="#414042"/><use href="#s" x="2047.400" fill="#58595b"/><use href="#s" x="2071.900" fill="#6d6e71"/><use href="#s" x="2096.400" fill="#808285"/><use href="#s" x="2120.800" fill="#939598"/><use href="#s" x="2145.300" fill="#a7a9ac"/><use href="#s" x="2169.800" fill="#bcbec0"/><use href="#s" x="2194.200" fill="#d1d3d4"/><use href="#s" x="2218.700" fill="#e6e7e8"/><use href="#s" x="2243.200" fill="#f1f2f2"/>
</g>
<g transform="translate(0,1387)">
<path d="M1976 3h8l1 2h-9zM1976 7h20v16h-20z" fill="#bdbdbd"/>
<use href="#s" x="1998.500" fill="#ed1c24"/><use href="#s" x="2023" fill="#f26522"/><use href="#s" x="2047.400" fill="#ffde17"/><use href="#s" x="2071.900" fill="#00a651"/><use href="#s" x="2096.400" fill="#21409a"/><use href="#s" x="2120.800" fill="#7f3f98"/>
</g>
<!-- swatch footer -->
<path d="M1983 1449h3v16h-3zM1988 1449h4v16h-4zM1995 1449L2001 1465" stroke="#c4c4c4" fill="#c4c4c4" stroke-width="1.500"/><path d="M2004 1463h5l-2.500 3z" fill="#c4c4c4"/>
<circle cx="2039" cy="1457" r="5.500" fill="none" stroke="#c4c4c4" stroke-width="3"/><circle cx="2046" cy="1450" r="3" fill="#c4c4c4"/><circle cx="2046" cy="1464" r="3" fill="#c4c4c4"/>
<path d="M2082 1460C2082 1452 2090 1455 2092 1451C2095 1444 2103 1447 2104 1452C2109 1452 2104 1466 2100 1465H2086Z" fill="#c4c4c4"/><path d="M2071 1462H2085M2081 1457L2086 1462L2081 1467" fill="none" stroke="#c4c4c4" stroke-width="2"/>
<rect x="2146" y="1448" width="18" height="18" fill="#c4c4c4"/><path d="M2148 1450h4v4h-4zM2154 1450h4v4h-4zM2148 1456h4v4h-4zM2154 1461h4v3h-4zM2159 1456h4v3h-4z" fill="#444"/><path d="M2165 1463h5l-2.500 3z" fill="#c4c4c4"/>
<rect x="2194" y="1448" width="17" height="18" fill="none" stroke="#6a6a6a" stroke-width="2"/><path d="M2198 1453h9M2198 1457h9M2198 1461h9" stroke="#6a6a6a" stroke-width="1.500"/>
<path d="M2237 1449h7l2 2h-9zM2237 1453h22v13h-22z" fill="#bdbdbd"/>
<path d="M2286 1448H2303V1466H2293L2286 1460Z" fill="#757575"/>
<path d="M2330 1451H2348M2335 1451V1448H2343V1451M2333 1453V1467H2345V1453M2337 1455V1465M2341 1455V1465" fill="none" stroke="#6a6a6a" stroke-width="1.800"/>

<!-- Color Guide -->
<rect x="1964" y="1479" width="433" height="47" fill="#424242"/><rect x="1964" y="1526" width="433" height="74" fill="#535353"/><rect x="1964" y="1479" width="145" height="48" fill="#535353"/>
<use href="#updn" x="1977" y="1503"/><text x="1991" y="1509" class="b" textLength="105" lengthAdjust="spacingAndGlyphs">Color Guide</text><use href="#burger" x="2369" y="1497"/>
<rect x="1973.500" y="1541.500" width="35" height="35" fill="#fff" stroke="#000" stroke-width="2"/><rect x="1979" y="1547" width="24" height="24" fill="#fff" stroke="#000" stroke-width="1.500"/>
<circle cx="2049" cy="1559" r="14" fill="#b8b8b8"/><path d="M2049 1545V1573M2035 1559H2063M2039 1549L2059 1569M2059 1549L2039 1569" stroke="#8a8a8a" stroke-width="1.500"/><circle cx="2049" cy="1559" r="3" fill="#555"/>
<rect x="2090" y="1551" width="18" height="14" fill="#b8b8b8" stroke="#c4c4c4"/><path d="M2096 1551V1565M2102 1551V1565" stroke="#535353" stroke-width="1"/><path d="M2081 1565h9M2085.500 1561v9" stroke="#c4c4c4" stroke-width="3"/>

<!-- Brushes -->
<rect x="1964" y="1605" width="433" height="47" fill="#424242"/><rect x="1964" y="1652" width="433" height="186" fill="#535353"/><rect x="1964" y="1605" width="100" height="48" fill="#535353"/>
<path d="M2150 1605V1652M2254 1605V1652" stroke="#3a3a3a" stroke-width="1.500"/>
<text x="1980" y="1635" class="b" textLength="70" lengthAdjust="spacingAndGlyphs">Brushes</text><text x="2079" y="1635" class="g" textLength="57" lengthAdjust="spacingAndGlyphs">Stroke</text><text x="2167" y="1635" class="g" textLength="74" lengthAdjust="spacingAndGlyphs">Symbols</text><use href="#burger" x="2369" y="1623"/>
<rect x="1973" y="1663" width="415" height="140" fill="#4e4e4e" stroke="#5f5f5f" stroke-width="1.500"/>
<g fill="#e2e2e2"><rect x="1974" y="1664" width="56" height="56"/><rect x="2032" y="1664" width="56" height="56"/><rect x="2090" y="1664" width="55" height="56"/><rect x="2147" y="1664" width="56" height="56"/><rect x="2205" y="1664" width="56" height="56"/><rect x="2263" y="1664" width="56" height="56"/><rect x="1974" y="1722" width="388" height="56"/><rect x="1974" y="1780" width="388" height="22"/></g>
<circle cx="2002" cy="1692" r="4.500" fill="#000"/><circle cx="2060" cy="1692" r="13.500" fill="#000"/><ellipse cx="2118" cy="1692" rx="3" ry="1.500" fill="#000" transform="rotate(-15 2118 1692)"/><ellipse cx="2176" cy="1692" rx="4.500" ry="2.200" fill="#000" transform="rotate(15 2176 1692)"/><path d="M2233 1688V1696" stroke="#999" stroke-width="1"/><circle cx="2291" cy="1692" r="11" fill="#000"/>
<rect x="1983" y="1748" width="320" height="4" fill="#000"/>
<text x="2312" y="1757" style="fill:#111" textLength="42" lengthAdjust="spacingAndGlyphs">Basic</text>
<use href="#cu" x="2376" y="1675"/><rect x="2368" y="1686" width="17" height="43" rx="8.500" fill="#6a6a6a"/><use href="#c" x="2376" y="1790"/>
<path d="M1983 1812h3v16h-3zM1988 1812h4v16h-4zM1995 1812L2001 1828" stroke="#c4c4c4" fill="#c4c4c4" stroke-width="1.500"/><path d="M2004 1826h5l-2.500 3z" fill="#c4c4c4"/>
<path d="M2027 1810h8l2 2h-10zM2027 1812h22v12h-22z" fill="#bdbdbd"/><ellipse cx="2045" cy="1823" rx="9" ry="6" fill="#535353" stroke="#c4c4c4" stroke-width="2"/><ellipse cx="2040" cy="1823" rx="5" ry="4" fill="none" stroke="#c4c4c4" stroke-width="1.500"/>
<path d="M2194 1812L2212 1830M2212 1812L2194 1830" stroke="#6a6a6a" stroke-width="3"/>
<rect x="2239" y="1812" width="17" height="18" fill="none" stroke="#6a6a6a" stroke-width="2"/><path d="M2243 1817h9M2243 1821h9M2243 1825h9" stroke="#6a6a6a" stroke-width="1.500"/>
<path d="M2285 1811H2303V1829H2293L2285 1821Z" fill="#c4c4c4"/><path d="M2285 1822H2293V1830" fill="none" stroke="#535353" stroke-width="2"/>
<path d="M2330 1814H2348M2335 1814V1811H2343V1814M2333 1816V1830H2345V1816M2337 1818V1828M2341 1818V1828" fill="none" stroke="#6a6a6a" stroke-width="1.800"/>

<!-- dialog -->
<rect x="875" y="439" width="661" height="841" rx="6" fill="#000" opacity=".45" style="filter:blur(28px)" transform="translate(0,32)"/>
<rect x="875" y="439" width="661" height="841" rx="6" fill="#535353"/>
<path d="M875 478V445Q875 439 881 439H1530Q1536 439 1536 445V478Z" fill="url(#tb)"/>
<text x="1136" y="467" style="font-size:21px;fill:#2c2c2c" textLength="137" lengthAdjust="spacingAndGlyphs">PNG Options</text>
<rect x="875" y="478" width="661" height="70" fill="#3273ec"/>
<text x="902" y="522" class="w" textLength="321" lengthAdjust="spacingAndGlyphs">Export in multiple scale factors.</text>
<rect x="1250" y="496" width="259" height="34" rx="17" fill="none" stroke="#fff" stroke-width="2"/>
<text x="1267" y="520" class="w" textLength="224" lengthAdjust="spacingAndGlyphs">Try Export for Screens</text>
<rect x="902.500" y="610.500" width="606" height="191" rx="3" fill="none" stroke="#484848" stroke-width="2"/>
<rect x="912" y="600" width="95" height="22" fill="#535353"/>
<text x="919" y="618" class="l" textLength="78" lengthAdjust="spacingAndGlyphs">Options</text>
<text x="945" y="671" class="l" textLength="112" lengthAdjust="spacingAndGlyphs">Resolution:</text>
<rect x="1065" y="644" width="246" height="34" rx="3" fill="#4a4a4a" stroke="#5f5f5f" stroke-width="1.500"/>
<text x="1076" y="669" class="w" textLength="146" lengthAdjust="spacingAndGlyphs">High (300 ppi)</text><use href="#c" x="1296" y="661"/>
<text x="920" y="723" class="l" textLength="137" lengthAdjust="spacingAndGlyphs">Anti-aliasing:</text>
<rect x="1065" y="698" width="381" height="34" rx="3" fill="#4a4a4a" stroke="#5f5f5f" stroke-width="1.500"/>
<text x="1076" y="723" class="w" textLength="249" lengthAdjust="spacingAndGlyphs">Type Optimized (Hinted)</text><use href="#c" x="1430" y="715"/>
<circle cx="1478" cy="714" r="11" fill="none" stroke="#c4c4c4" stroke-width="2"/><text x="1478" y="721" text-anchor="middle" style="font-family:'Liberation Serif',serif;font-weight:700;font-size:18px;fill:#c4c4c4">i</text>
<rect x="1066" y="752" width="20" height="21" rx="2" fill="#4a4a4a" stroke="#c4c4c4" stroke-width="1.500"/>
<text x="1096" y="772" class="w" textLength="99" lengthAdjust="spacingAndGlyphs">Interlaced</text>
<rect x="902.500" y="857.500" width="606" height="284" rx="3" fill="none" stroke="#484848" stroke-width="2"/>
<rect x="912" y="846" width="93" height="22" fill="#535353"/>
<text x="919" y="865" class="l" textLength="76" lengthAdjust="spacingAndGlyphs">Preview</text>
<text x="1014" y="918" class="l" textLength="186" lengthAdjust="spacingAndGlyphs">Background Color:</text>
<rect x="1208" y="890" width="189" height="35" rx="3" fill="#4a4a4a" stroke="#4a90d9" stroke-width="2"/>
<text x="1220" y="916" class="w" textLength="122" lengthAdjust="spacingAndGlyphs">Transparent</text><use href="#c" x="1381" y="907"/>
<rect x="1118" y="943" width="174" height="174" fill="#000"/>
<rect x="1121" y="946" width="168" height="168" fill="url(#chk)"/>
<use href="#art" transform="translate(1121.500 946) scale(.16438) translate(-427 -501)"/>
<rect x="1180" y="1183" width="162" height="43" rx="21.500" fill="none" stroke="#e8e8e8" stroke-width="2"/>
<text x="1226" y="1213" class="w" textLength="67" lengthAdjust="spacingAndGlyphs">Cancel</text>
<rect x="1349" y="1183" width="161" height="43" rx="21.500" fill="#535353" stroke="#fff" stroke-width="3"/>
<text x="1414" y="1213" class="w" textLength="29" lengthAdjust="spacingAndGlyphs">OK</text>
<path d="M1375 1161C1410 1150 1475 1150 1503 1170C1522 1186 1520 1222 1490 1238C1450 1250 1390 1250 1352 1232C1328 1216 1333 1180 1375 1161C1395 1155 1430 1153 1450 1154" fill="none" stroke="#ed1c24" stroke-width="15" stroke-linecap="round"/>

<rect x="0" y="0" width="2" height="1840" fill="#2b2b2b" opacity=".8"/>
<rect x="0" y="0" width="2400" height="6" fill="#141414"/>
<path d="M0 6H10Q3 7 2 14V6ZM2400 6H2390Q2397 7 2398 14V6Z" fill="#141414"/>
</svg>
</body></html>
